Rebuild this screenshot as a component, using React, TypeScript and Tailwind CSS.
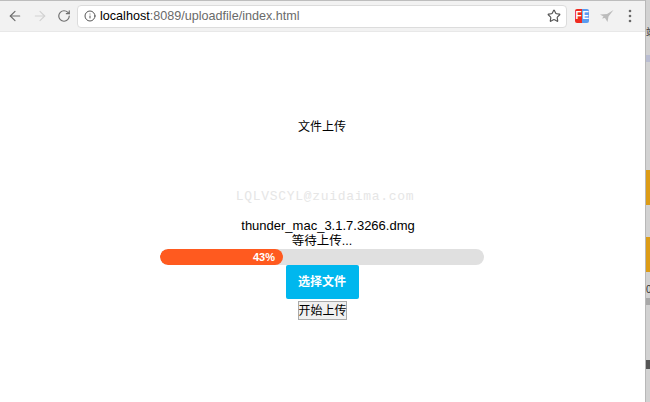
import React from 'react';
import { ArrowLeft, ArrowRight, RotateCw, Info, Star } from 'lucide-react';

const cjk = "font-['Liberation_Sans','Noto_Sans_CJK_SC',sans-serif]";

const App: React.FC = () => {
  return (
    <div className={`flex h-[402px] w-[650px] overflow-hidden bg-white text-black ${cjk}`}>
      <div className="flex flex-col w-[645px] shrink-0">
        {/* Browser toolbar */}
        <div className="flex items-center h-[32px] shrink-0 bg-[#f2f2f2] border-t border-[#bdbdbd] border-b-[#e8e8e8] border-b">
          <div className="flex items-center gap-[9px] pl-[7px] w-[77px]">
            <ArrowLeft size={16} strokeWidth={1.8} className="text-[#6e6e6e]" />
            <ArrowRight size={16} strokeWidth={1.8} className="text-[#d2d2d2]" />
            <RotateCw size={14} strokeWidth={2} className="text-[#6e6e6e]" />
          </div>
          <div className="flex items-center h-[23px] w-[490px] pl-[6px] pr-[5px] bg-white border border-[#dcdcdc] rounded-[4px]">
            <Info size={12} className="text-[#555555] mr-[4px]" />
            <span className="text-[12.6px] text-[#6a6a6a]">
              <span className="text-black">localhost</span>:8089/uploadfile/index.html
            </span>
            <Star size={14} className="ml-auto text-[#555555]" />
          </div>
          <div className="flex items-center ml-[8px] gap-[10px]">
            <div className="flex w-[14px] h-[14px] rounded-[2px] overflow-hidden text-[10px] font-bold text-white leading-[14px]">
              <span className="w-[7px] bg-[#ef2b20] text-center">F</span>
              <span className="w-[7px] bg-[#5a9bf0] text-center">E</span>
            </div>
            <svg width="15" height="14" viewBox="0 0 15 14">
              <path d="M14.5 1 L8 5 L1 5.5 L4.5 7.5 L3 9.5 L6 9 L8.5 13 L9.5 7.5 Z" fill="#bcbcbc" />
            </svg>
            <svg width="4" height="14" viewBox="0 0 4 14" className="ml-[4px]">
              <circle cx="2" cy="2" r="1.3" fill="#6a6a6a" />
              <circle cx="2" cy="7" r="1.3" fill="#6a6a6a" />
              <circle cx="2" cy="12" r="1.3" fill="#6a6a6a" />
            </svg>
          </div>
        </div>

        {/* Page */}
        <div className="flex flex-col items-center flex-1 pr-[1px] text-[12px] leading-[15px]">
          <div className="mt-[88px]">文件上传</div>
          <div className="mt-[54px] pl-[6px] font-['Liberation_Mono',monospace] text-[13px] tracking-[0.7px] text-[#e6e6e6]">
            LQLVSCYL@zuidaima.com
          </div>
          <div className="mt-[14px] pl-[12px] text-[13px]">thunder_mac_3.1.7.3266.dmg</div>
          <div className="mt-[1px] text-[12.5px]">等待上传...</div>
          <div className="w-[324px] h-[16px] rounded-full bg-[#e0e0e0] overflow-hidden">
            <div className="flex items-center justify-end w-[123px] h-full pr-[8px] rounded-full bg-[#ff5a1f] text-[11px] font-bold text-white">
              43%
            </div>
          </div>
          <button className="w-[73px] h-[34px] rounded-[2px] bg-[#00b7ee] text-white text-[12px] font-bold">
            选择文件
          </button>
          <button className="mt-[2px] w-[49px] h-[19px] p-0 whitespace-nowrap bg-[#f0f0f0] border border-[#aaaaaa] text-[12px] leading-none">
            开始上传
          </button>
        </div>
      </div>

      {/* Window behind */}
      <div className="flex flex-col flex-1 bg-[#d2d2d2] border-l border-[#b8b8b8] overflow-hidden text-[10px] leading-[10px] text-[#333333] whitespace-nowrap">
        <div className="h-[28px] shrink-0" />
        <div className="h-[10px] shrink-0">端</div>
        <div className="h-[17px] shrink-0" />
        <div className="h-[7px] shrink-0 bg-[#b9bdd2]" />
        <div className="h-[108px] shrink-0" />
        <div className="h-[35px] shrink-0 bg-[#dc9c16]" />
        <div className="h-[32px] shrink-0" />
        <div className="h-[35px] shrink-0 bg-[#dc9c16]" />
        <div className="h-[13px] shrink-0" />
        <div className="h-[10px] shrink-0">0</div>
        <div className="h-[3px] shrink-0" />
        <div className="h-[7px] shrink-0 bg-[#a8a8a8]" />
        <div className="h-[55px] shrink-0" />
        <div className="h-[9px] shrink-0 bg-[#555555]" />
      </div>
    </div>
  );
};

export default App;
